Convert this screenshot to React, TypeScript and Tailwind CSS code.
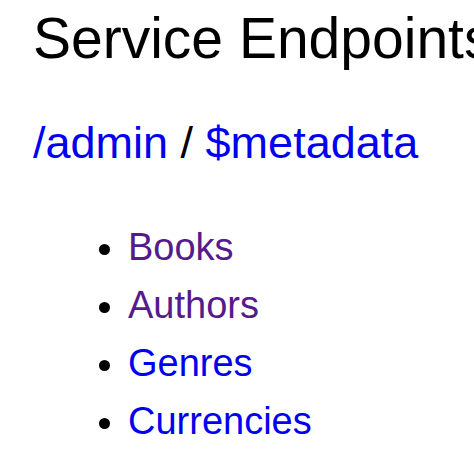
import React from "react";

const links = [
  { label: "Books", visited: true },
  { label: "Authors", visited: true },
  { label: "Genres", visited: false },
  { label: "Currencies", visited: false },
];

const App = () => {
  return (
    <div className="h-[455px] w-[474px] overflow-hidden bg-white pl-[33px] font-['Liberation_Sans',Arial,sans-serif] text-black">
      <h1 className="mt-[10px] whitespace-nowrap text-[57px] leading-[57px]">Service Endpoints</h1>

      <h2 className="mt-[53px] whitespace-nowrap text-[45px] leading-[45px]">
        <a href="#" className="text-[#0000EE]">/admin</a> / <a href="#" className="text-[#0000EE]">$metadata</a>
      </h2>

      <ul className="mt-[53px] list-disc pl-[95px] text-[38px] leading-[58px]">
        {links.map((l) => (
          <li key={l.label}>
            <a href="#" className={l.visited ? "text-[#551A8B]" : "text-[#0000EE]"}>
              {l.label}
            </a>
          </li>
        ))}
      </ul>
    </div>
  );
};

export default App;
